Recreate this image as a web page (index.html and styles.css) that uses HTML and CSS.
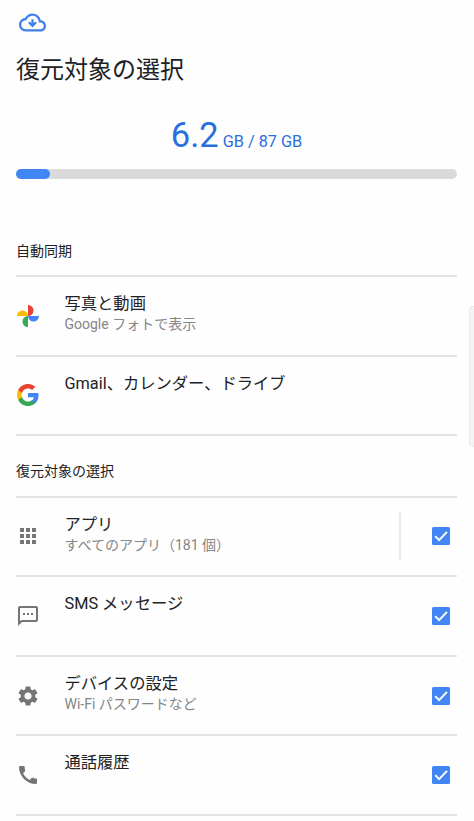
FILE: index.html
```html
<!DOCTYPE html>
<html lang="ja">
<head>
<meta charset="utf-8">
<title>復元対象の選択</title>
<link rel="stylesheet" href="styles.css">
</head>
<body>
<main class="page">
  <header class="header">
    <svg class="cloud" viewBox="0 0 24 24"><path d="M19.35 10.04C18.67 6.59 15.64 4 12 4 9.11 4 6.6 5.64 5.35 8.04 2.34 8.36 0 10.91 0 14c0 3.31 2.69 6 6 6h13c2.76 0 5-2.24 5-5 0-2.64-2.05-4.78-4.65-4.96zM19 18H6c-2.21 0-4-1.79-4-4 0-2.05 1.53-3.76 3.56-3.97l1.07-.11.5-.95C8.08 7.14 9.94 6 12 6c2.62 0 4.88 1.86 5.39 4.43l.3 1.5 1.53.11c1.56.1 2.78 1.41 2.78 2.96 0 1.65-1.35 3-3 3z"/><path d="M11 9h2v3.400l1.500-1.400 1.400 1.400L12 16.400l-3.900-4 1.400-1.400L11 12.400z"/></svg>
    <h1 class="title">復元対象の選択</h1>
  </header>
  <section class="storage">
    <p class="amount"><span class="used">6.2</span><span class="total">GB / 87 GB</span></p>
    <div class="track"><div class="fill"></div></div>
  </section>
  <section>
    <h2 class="section-title">自動同期</h2>
    <ul class="list">
      <li class="row">
        <svg class="icon" viewBox="0 0 24 24"><path fill="#ea4335" d="M12 1a5.500 5.500 0 0 1 0 11z"/><path fill="#4285f4" d="M23 12a5.500 5.500 0 0 1-11 0z"/><path fill="#34a853" d="M12 23a5.500 5.500 0 0 1 0-11z"/><path fill="#fbbc04" d="M1 12a5.500 5.500 0 0 1 11 0z"/></svg>
        <div class="text"><h3 class="name">写真と動画</h3><p class="note">Google フォトで表示</p></div>
      </li>
      <li class="row">
        <svg class="icon" viewBox="0 0 24 24"><path fill="#4285f4" d="M22.560 12.250c0-.78-.07-1.530-.2-2.250H12v4.260h5.920c-.26 1.370-1.040 2.530-2.210 3.310v2.770h3.570c2.080-1.920 3.280-4.740 3.280-8.090z"/><path fill="#34a853" d="M12 23c2.970 0 5.460-.98 7.280-2.660l-3.570-2.770c-.98.66-2.230 1.060-3.710 1.060-2.860 0-5.290-1.930-6.160-4.530H2.180v2.840C3.990 20.530 7.700 23 12 23z"/><path fill="#fbbc05" d="M5.840 14.090c-.22-.66-.35-1.360-.35-2.090s.13-1.430.35-2.090V7.070H2.180C1.430 8.550 1 10.220 1 12s.43 3.450 1.180 4.930z"/><path fill="#ea4335" d="M12 5.380c1.620 0 3.060.56 4.210 1.640l3.150-3.150C17.450 2.090 14.970 1 12 1 7.700 1 3.990 3.470 2.180 7.070l3.660 2.840c.87-2.600 3.300-4.530 6.160-4.530z"/></svg>
        <div class="text"><h3 class="name">Gmail、カレンダー、ドライブ</h3></div>
      </li>
    </ul>
  </section>
  <section>
    <h2 class="section-title section-title-select">復元対象の選択</h2>
    <ul class="list">
      <li class="row">
        <svg class="icon" viewBox="0 0 24 24"><path d="M4 8h4V4H4zm6 12h4v-4h-4zm-6 0h4v-4H4zm0-6h4v-4H4zm6 0h4v-4h-4zm6-10v4h4V4zm-6 4h4V4h-4zm6 6h4v-4h-4zm0 6h4v-4h-4z"/></svg>
        <div class="text"><h3 class="name">アプリ</h3><p class="note">すべてのアプリ（181 個）</p></div>
        <div class="separator"></div>
        <svg class="check" viewBox="0 0 18 18"><rect width="18" height="18" rx="1.500"/><path d="M3.200 9.100l3.900 4 7.900-8.200"/></svg>
      </li>
      <li class="row">
        <svg class="icon" viewBox="0 0 24 24"><path d="M20 2H4c-1.100 0-2 .9-2 2v18l4-4h14c1.100 0 2-.9 2-2V4c0-1.100-.9-2-2-2zm0 14H5.200L4 17.200V4h16zM7 9h2v2H7zm4 0h2v2h-2zm4 0h2v2h-2z"/></svg>
        <div class="text"><h3 class="name">SMS メッセージ</h3></div>
        <svg class="check" viewBox="0 0 18 18"><rect width="18" height="18" rx="1.500"/><path d="M3.200 9.100l3.900 4 7.900-8.200"/></svg>
      </li>
      <li class="row">
        <svg class="icon" viewBox="0 0 24 24"><path d="M19.140 12.940c.04-.3.060-.61.060-.94 0-.32-.02-.64-.07-.94l2.030-1.580c.18-.14.230-.41.120-.61l-1.920-3.320c-.12-.22-.37-.29-.59-.22l-2.390.96c-.5-.38-1.030-.7-1.620-.94l-.36-2.540c-.04-.24-.24-.41-.48-.41h-3.840c-.24 0-.43.170-.47.410l-.36 2.540c-.59.240-1.130.57-1.620.94l-2.390-.96c-.22-.08-.47 0-.59.220L2.740 8.870c-.12.210-.08.470.12.610l2.030 1.580c-.05.3-.09.630-.09.940s.02.640.07.940l-2.030 1.580c-.18.140-.23.410-.12.610l1.920 3.320c.12.220.37.290.59.220l2.390-.96c.5.380 1.030.7 1.620.94l.36 2.540c.05.240.24.410.48.410h3.840c.24 0 .44-.17.470-.41l.36-2.540c.59-.24 1.130-.56 1.620-.94l2.390.96c.22.080.47 0 .59-.22l1.920-3.320c.12-.22.070-.47-.12-.61zM12 15.600c-1.980 0-3.600-1.620-3.600-3.600s1.620-3.600 3.600-3.600 3.600 1.620 3.600 3.600-1.620 3.600-3.600 3.600z"/></svg>
        <div class="text"><h3 class="name">デバイスの設定</h3><p class="note">Wi-Fi パスワードなど</p></div>
        <svg class="check" viewBox="0 0 18 18"><rect width="18" height="18" rx="1.500"/><path d="M3.200 9.100l3.900 4 7.900-8.200"/></svg>
      </li>
      <li class="row">
        <svg class="icon" viewBox="0 0 24 24"><path d="M20.010 15.380c-1.230 0-2.420-.2-3.530-.56-.35-.12-.74-.03-1.010.24l-1.570 1.970c-2.830-1.350-5.480-3.900-6.890-6.830l1.950-1.660c.27-.28.350-.67.240-1.020-.37-1.110-.56-2.300-.56-3.530 0-.54-.45-.99-.99-.99H4.190C3.650 3 3 3.240 3 3.990 3 13.280 10.730 21 20.010 21c.71 0 .99-.63.990-1.180v-3.450c0-.54-.45-.99-.99-.99z"/></svg>
        <div class="text"><h3 class="name">通話履歴</h3></div>
        <svg class="check" viewBox="0 0 18 18"><rect width="18" height="18" rx="1.500"/><path d="M3.200 9.100l3.900 4 7.900-8.200"/></svg>
      </li>
    </ul>
  </section>
  <div class="edge-handle"></div>
</main>
</body>
</html>
```
FILE: styles.css
```css
* { box-sizing: border-box; margin: 0; padding: 0; }
body {
  background: #fefefe;
  color: #202124;
  font-family: Roboto, "Noto Sans CJK JP", sans-serif;
  overflow: hidden;
}
.page { position: relative; height: 821px; padding: 0 17px 0 16px; overflow: hidden; }
.header { height: 110px; padding-top: 9px; }
.cloud { display: block; width: 27px; height: 27px; margin-left: 3px; fill: #3f7fec; }
.title { margin-top: 18px; font-size: 24px; font-weight: 400; line-height: 32px; }
.storage { height: 121px; }
.amount {
  display: flex;
  justify-content: center;
  align-items: baseline;
  gap: 4px;
  height: 59px;
  padding-top: 4px;
  color: #2a6fe0;
  line-height: 42px;
}
.used { font-size: 34.500px; }
.total { font-size: 16.300px; }
.track { height: 10px; border-radius: 5px; background: #dadada; }
.fill { width: 34px; height: 10px; border-radius: 5px; background: #4285f4; }
.section-title { height: 44px; padding-top: 10px; font-size: 14px; font-weight: 400; line-height: 20px; }
.section-title-select { height: 59.400px; padding-top: 25px; }
.list { list-style: none; border-top: 2px solid #e4e4e4; }
.row { display: flex; align-items: center; height: 79.600px; border-bottom: 2px solid #e4e4e4; }
.icon { flex: none; width: 24px; height: 24px; fill: #757575; }
.text { flex: 1; align-self: flex-start; margin-left: 24.500px; padding-top: 15px; }
.name { font-size: 16.300px; font-weight: 400; line-height: 24px; }
.note { margin-top: -2px; color: #858585; font-size: 14px; line-height: 20px; }
.separator { width: 2px; height: 48px; margin-right: 31px; background: #e8e8e8; }
.check { flex: none; width: 18px; height: 18px; margin-right: 7px; fill: #4285f4; }
.check path { fill: none; stroke: #fff; stroke-width: 2; }
.edge-handle {
  position: absolute;
  top: 306px;
  right: -8px;
  width: 13px;
  height: 141px;
  border: 1px solid #e9e9e9;
  border-radius: 4px;
  background: #f4f4f4;
}
```
